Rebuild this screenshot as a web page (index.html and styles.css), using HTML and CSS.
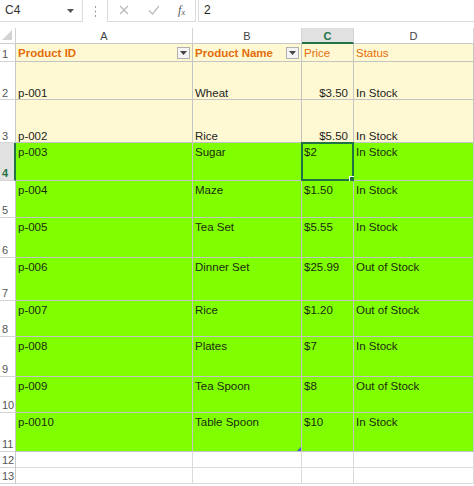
FILE: index.html
```html
<!DOCTYPE html>
<html>
<head>
<meta charset="utf-8">
<link rel="stylesheet" href="styles.css">
</head>
<body>
<div class="toolbar">
  <div class="namebox"><span>C4</span><svg class="caret" width="7" height="4" viewBox="0 0 7 4"><path d="M0 0H7L3.5 4Z" fill="#555"/></svg></div>
  <div class="dots"><svg width="3" height="13" viewBox="0 0 3 13"><rect x="1" y="1" width="1" height="2" fill="#9a9a9a"/><rect x="1" y="5.5" width="1" height="2" fill="#9a9a9a"/><rect x="1" y="10" width="1" height="2" fill="#9a9a9a"/></svg></div>
  <div class="fbtns">
    <svg width="10" height="10" viewBox="0 0 10 10"><path d="M1 1L9 9M9 1L1 9" stroke="#b9b9b9" stroke-width="1.2"/></svg>
    <svg width="12" height="10" viewBox="0 0 12 10"><path d="M1 5.5L4.5 9L11 1" stroke="#b9b9b9" stroke-width="1.2" fill="none"/></svg>
    <span class="fx">f<sub>x</sub></span>
  </div>
  <div class="finput">2</div>
</div>
<div class="sheet">
  <div class="corner"><svg width="10" height="10" viewBox="0 0 10 10"><path d="M10 0V10H0Z" fill="#d3d3d3"/></svg></div>
  <div class="ch">A</div>
  <div class="ch">B</div>
  <div class="ch csel">C</div>
  <div class="ch">D</div>

  <div class="rh">1</div>
  <div class="c y hd bold">Product ID<span class="filt"><svg width="7" height="4" viewBox="0 0 7 4"><path d="M0 0H7L3.5 4Z" fill="#444"/></svg></span></div>
  <div class="c y hd bold">Product Name<span class="filt"><svg width="7" height="4" viewBox="0 0 7 4"><path d="M0 0H7L3.5 4Z" fill="#444"/></svg></span></div>
  <div class="c y hd">Price</div>
  <div class="c y hd">Status</div>

  <div class="rh low">2</div>
  <div class="c y">p-001</div>
  <div class="c y">Wheat</div>
  <div class="c y r">$3.50</div>
  <div class="c y">In Stock</div>

  <div class="rh low">3</div>
  <div class="c y">p-002</div>
  <div class="c y">Rice</div>
  <div class="c y r">$5.50</div>
  <div class="c y">In Stock</div>

  <div class="rh rsel">4</div>
  <div class="c g">p-003</div>
  <div class="c g">Sugar</div>
  <div class="c g sel">$2</div>
  <div class="c g">In Stock</div>

  <div class="rh">5</div>
  <div class="c g">p-004</div>
  <div class="c g">Maze</div>
  <div class="c g">$1.50</div>
  <div class="c g">In Stock</div>

  <div class="rh">6</div>
  <div class="c g">p-005</div>
  <div class="c g">Tea Set</div>
  <div class="c g">$5.55</div>
  <div class="c g">In Stock</div>

  <div class="rh">7</div>
  <div class="c g">p-006</div>
  <div class="c g">Dinner Set</div>
  <div class="c g">$25.99</div>
  <div class="c g">Out of Stock</div>

  <div class="rh">8</div>
  <div class="c g">p-007</div>
  <div class="c g">Rice</div>
  <div class="c g">$1.20</div>
  <div class="c g">Out of Stock</div>

  <div class="rh">9</div>
  <div class="c g">p-008</div>
  <div class="c g">Plates</div>
  <div class="c g">$7</div>
  <div class="c g">In Stock</div>

  <div class="rh">10</div>
  <div class="c g">p-009</div>
  <div class="c g">Tea Spoon</div>
  <div class="c g">$8</div>
  <div class="c g">Out of Stock</div>

  <div class="rh">11</div>
  <div class="c g">p-0010</div>
  <div class="c g tend">Table Spoon</div>
  <div class="c g">$10</div>
  <div class="c g">In Stock</div>

  <div class="rh">12</div>
  <div class="c w"></div>
  <div class="c w"></div>
  <div class="c w"></div>
  <div class="c w"></div>

  <div class="rh">13</div>
  <div class="c w"></div>
  <div class="c w"></div>
  <div class="c w"></div>
  <div class="c w"></div>
</div>
</body>
</html>
```

FILE: styles.css
```css
html, body {
  margin: 0;
  padding: 0;
  background: #ffffff;
  overflow: hidden;
}
body {
  width: 474px;
  height: 486px;
  font-family: "Liberation Sans", Arial, sans-serif;
  font-size: 12px;
  color: #222;
}
* { box-sizing: border-box; }

.toolbar {
  display: flex;
  height: 22px;
  margin-bottom: 6px;
}
.namebox {
  width: 83px;
  border-right: 1px solid #dcdcdc;
  border-bottom: 1px solid #dcdcdc;
  display: flex;
  align-items: center;
  justify-content: space-between;
  padding: 0 8px 1px 5px;
  font-size: 12px;
  color: #333;
}
.namebox .caret { margin-top: 1px; }
.dots {
  width: 24px;
  display: flex;
  align-items: center;
  justify-content: center;
}
.fbtns {
  width: 89px;
  border-left: 1px solid #dcdcdc;
  border-right: 1px solid #dcdcdc;
  border-bottom: 1px solid #dcdcdc;
  display: flex;
  align-items: center;
  justify-content: space-between;
  padding: 0 10px 1px 11px;
}
.fx {
  font-family: "Liberation Serif", serif;
  font-style: italic;
  font-size: 12px;
  color: #555;
}
.fx sub { font-size: 8px; vertical-align: -1px; }
.finput {
  flex: 1;
  margin-left: 2px;
  border-left: 1px solid #dcdcdc;
  border-bottom: 1px solid #dcdcdc;
  display: flex;
  align-items: center;
  padding: 0 0 1px 5px;
  font-size: 12px;
  color: #222;
}

.sheet {
  display: grid;
  grid-template-columns: 16px 177px 109px 52px 1fr;
  grid-template-rows: 16px 18px 38px 43px 38px 37px 40px 43px 36px 40px 36px 39px 16px 16px;
  font-size: 11.5px;
}
.corner {
  border-right: 1px solid #d0d0d0;
  border-bottom: 1px solid #d0d0d0;
  display: flex;
  align-items: flex-end;
  justify-content: flex-end;
  padding: 0 3px 3px 0;
}
.ch {
  border-right: 1px solid #d4d4d4;
  border-bottom: 1px solid #c8c8c8;
  display: flex;
  align-items: center;
  justify-content: center;
  font-size: 11px;
  color: #444;
  padding-top: 1px;
}
.ch.csel {
  background: #e1e1e1;
  border-bottom: 2px solid #217346;
  color: #217346;
  font-weight: bold;
}
.rh {
  border-right: 1px solid #c8c8c8;
  border-bottom: 1px solid #d4d4d4;
  display: flex;
  align-items: flex-end;
  padding: 0 0 1px 2px;
  font-size: 11px;
  color: #555;
}
.rh.low { padding-bottom: 0; line-height: 11px; }
.rh.rsel {
  background: #e1e1e1;
  border-right: 2px solid #217346;
  color: #217346;
  font-weight: bold;
}

.c {
  position: relative;
  border-right: 1px solid #c4c4c4;
  border-bottom: 1px solid #c4c4c4;
  padding: 0 2px;
  white-space: nowrap;
  display: flex;
  line-height: 14px;
}
.c.y {
  background: #fff9d3;
  align-items: flex-end;
  padding-bottom: 0;
  line-height: 12px;
}
.c.g {
  background: #80ff00;
  align-items: flex-start;
  padding-top: 2px;
  color: #1c2a10;
}
.c.w {
  background: #ffffff;
  border-color: #dadada;
}
.c.r { justify-content: flex-end; padding-right: 5px; }
.c.hd {
  color: #e36c0a;
  align-items: center;
  padding-top: 1px;
  line-height: 14px;
}
.c.bold { font-weight: bold; }

.filt {
  position: absolute;
  right: 2px;
  top: 3px;
  width: 13px;
  height: 12px;
  border: 1px solid #b0b0b0;
  background: #f4f4f4;
  display: flex;
  align-items: center;
  justify-content: center;
}

.sel::before {
  content: "";
  position: absolute;
  left: -1px;
  top: -1px;
  right: -1px;
  bottom: -1px;
  border: 2px solid #217346;
}
.sel::after {
  content: "";
  position: absolute;
  right: -4px;
  bottom: -4px;
  width: 6px;
  height: 6px;
  background: #217346;
  border: 1px solid #ffffff;
}
.tend::after {
  content: "";
  position: absolute;
  right: 0;
  bottom: 0;
  width: 0;
  height: 0;
  border-left: 4px solid transparent;
  border-bottom: 4px solid #3f5fbf;
}
```
